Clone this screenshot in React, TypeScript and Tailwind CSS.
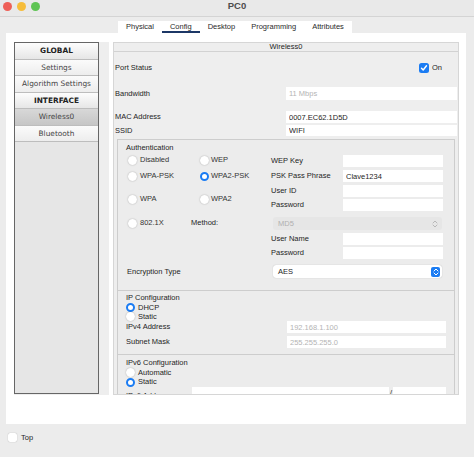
import React from "react";

const listItems: { label: string; kind?: "head" | "sel" }[] = [
  { label: "GLOBAL", kind: "head" },
  { label: "Settings" },
  { label: "Algorithm Settings" },
  { label: "INTERFACE", kind: "head" },
  { label: "Wireless0", kind: "sel" },
  { label: "Bluetooth" },
];

const tabs = ["Physical", "Config", "Desktop", "Programming", "Attributes"];

function Radio({ on }: { on?: boolean }) {
  if (on) {
    return <span className="w-[9px] h-[9px] rounded-full border-[2.5px] border-[#1b7cf3] bg-white shrink-0" />;
  }
  return <span className="w-[9px] h-[9px] rounded-full bg-white shadow-[0_0_1.5px_rgba(0,0,0,0.35)] shrink-0" />;
}

function Field({ value, placeholder, className = "" }: { value?: string; placeholder?: string; className?: string }) {
  return (
    <input
      readOnly
      value={value ?? ""}
      placeholder={placeholder}
      className={`h-full bg-white px-[3px] text-[7.5px] text-[#1e1e1e] placeholder:text-[#b4b4b4] outline-none border-0 ${className}`}
    />
  );
}

function Stepper({ active }: { active?: boolean }) {
  return (
    <span
      className={`w-[9px] h-[10px] rounded-[2px] flex items-center justify-center ${
        active ? "bg-[#1b7cf3]" : ""
      }`}
    >
      <svg width="6" height="8" viewBox="0 0 6 8" fill="none">
        <path d="M1 3 L3 1 L5 3 M1 5 L3 7 L5 5" stroke={active ? "#fff" : "#b8b8b8"} strokeWidth="1" strokeLinecap="round" strokeLinejoin="round" />
      </svg>
    </span>
  );
}

export default function App() {
  return (
    <div className="w-[474px] h-[457px] bg-[#ececec] flex flex-col overflow-hidden font-['Liberation_Sans',Arial,sans-serif] text-[#1e1e1e]">
      {/* Title bar */}
      <div className="h-[17px] shrink-0 border-b border-[#d4d4d4] bg-[#e9e9e9]">
        <div className="h-[13px] flex items-center pl-[3px]">
          <div className="flex gap-[5px] w-[60px]">
            <span className="w-[9px] h-[9px] rounded-full bg-[#ee5f57]" />
            <span className="w-[9px] h-[9px] rounded-full bg-[#f6bd3b]" />
            <span className="w-[9px] h-[9px] rounded-full bg-[#5fc454]" />
          </div>
          <div className="flex-1 text-center text-[9.5px] font-bold text-[#4d4d4d] pr-[63px]">PC0</div>
        </div>
      </div>

      {/* Tabs */}
      <div className="h-[16px] shrink-0 flex items-end pl-[118px]">
        <div className="h-[12px] flex bg-white">
          {tabs.map((t) => (
            <div key={t} className="relative px-[8px] flex items-center text-[7.5px] text-[#2a2a2a]">
              {t}
              {t === "Config" && <span className="absolute left-0 right-0 bottom-0 h-[2px] bg-[#1c3766]" />}
            </div>
          ))}
        </div>
      </div>

      {/* Main */}
      <div className="h-[391px] shrink-0 ml-[6px] w-[460px] bg-white pt-[9px] pl-[8px] flex gap-[4px] items-start">
        {/* Left list */}
        <div className="w-[95px] h-[353px] bg-[#eeeeee] font-['DejaVu_Sans',Verdana,sans-serif]">
          <div className="w-[85px] h-[352px] border border-[#666] bg-[#e6e6e6] flex flex-col">
            {listItems.map((it) => (
              <div
                key={it.label}
                className={`h-[16.5px] shrink-0 flex items-center justify-center border-b border-[#bdbdbd] text-[7.4px] ${
                  it.kind === "head"
                    ? "font-bold text-[#222] bg-linear-to-b from-[#fdfdfd] to-[#e6e6e6]"
                    : it.kind === "sel"
                    ? "text-[#444] bg-linear-to-b from-[#d8d8d8] to-[#c6c6c6]"
                    : "text-[#444] bg-linear-to-b from-[#fbfbfb] to-[#ededed]"
                }`}
              >
                {it.label}
              </div>
            ))}
          </div>
        </div>

        {/* Right panel */}
        <div className="w-[346px] h-[353px] overflow-hidden border border-[#d6d6d6] bg-[#eeeeee] flex flex-col text-[7.5px]">
          <div className="h-[9px] shrink-0 flex items-center justify-center border-b border-[#d2d2d2]">Wireless0</div>

          <div className="h-[32px] shrink-0 flex items-center justify-between pl-[1px] pr-[16px]">
            <span>Port Status</span>
            <div className="flex items-center gap-[3px]">
              <span className="w-[10px] h-[10px] rounded-[2.5px] bg-[#1b7cf3] flex items-center justify-center">
                <svg width="8" height="8" viewBox="0 0 8 8" fill="none">
                  <path d="M1.5 4.2 L3.2 6 L6.5 1.8" stroke="#fff" strokeWidth="1.4" strokeLinecap="round" strokeLinejoin="round" />
                </svg>
              </span>
              <span>On</span>
            </div>
          </div>

          <div className="mt-[3px] h-[13px] shrink-0 flex items-center justify-between pl-[1px] pr-[1px]">
            <span>Bandwidth</span>
            <Field placeholder="11 Mbps" className="w-[171px]" />
          </div>
          <div className="mt-[11px] h-[12px] shrink-0 flex items-center justify-between pl-[1px] pr-[1px]">
            <span>MAC Address</span>
            <Field value="0007.EC62.1D5D" className="w-[171px]" />
          </div>
          <div className="mt-[2px] h-[11px] shrink-0 flex items-center justify-between pl-[1px] pr-[1px]">
            <span>SSID</span>
            <Field value="WIFI" className="w-[171px]" />
          </div>

          {/* Authentication */}
          <div className="mt-[3px] ml-[3px] mr-[3px] shrink-0 border border-[#cdcdcd] bg-[#ececec] flex flex-col pb-[12px]">
            <div className="mt-[3px] h-[10px] flex items-center pl-[8px]">Authentication</div>
            <div className="flex">
              <div className="w-[152px] flex flex-col pl-[10px]">
                <div className="h-[14px] flex items-center">
                  <div className="w-[72px] flex items-center gap-[3px]"><Radio /><span className="text-[#333]">Disabled</span></div>
                  <div className="flex items-center gap-[2px]"><Radio /><span className="text-[#333]">WEP</span></div>
                </div>
                <div className="mt-[2px] h-[14px] flex items-center">
                  <div className="w-[72px] flex items-center gap-[3px]"><Radio /><span className="text-[#333]">WPA-PSK</span></div>
                  <div className="flex items-center gap-[2px]"><Radio on /><span className="text-[#333]">WPA2-PSK</span></div>
                </div>
                <div className="mt-[9px] h-[14px] flex items-center">
                  <div className="w-[72px] flex items-center gap-[3px]"><Radio /><span className="text-[#333]">WPA</span></div>
                  <div className="flex items-center gap-[2px]"><Radio /><span className="text-[#333]">WPA2</span></div>
                </div>
                <div className="mt-[10px] h-[14px] flex items-center">
                  <div className="w-[63px] flex items-center gap-[3px]"><Radio /><span className="text-[#333]">802.1X</span></div>
                  <span>Method:</span>
                </div>
              </div>
              <div className="w-[174px] flex flex-col">
                {[
                  { l: "WEP Key", v: "", mt: "mt-[2px]" },
                  { l: "PSK Pass Phrase", v: "Clave1234", mt: "mt-[3px]" },
                  { l: "User ID", v: "", mt: "mt-[3px]" },
                  { l: "Password", v: "", mt: "mt-[2px]" },
                ].map((r) => (
                  <div key={r.l} className={`${r.mt} h-[12px] flex items-center`}>
                    <span className="w-[73px] pl-[1px]">{r.l}</span>
                    <Field value={r.v} className="w-[100px]" />
                  </div>
                ))}
                <div className="mt-[6px] ml-[3px] w-[169px] h-[13px] rounded-[3px] bg-[#e6e6e6] flex items-center justify-between pl-[5px] pr-[3px] text-[#b0b0b0]">
                  <span>MD5</span>
                  <Stepper />
                </div>
                {[
                  { l: "User Name", mt: "mt-[3px]" },
                  { l: "Password", mt: "mt-[2px]" },
                ].map((r) => (
                  <div key={r.l + r.mt} className={`${r.mt} h-[12px] flex items-center`}>
                    <span className="w-[73px] pl-[1px]">{r.l}</span>
                    <Field className="w-[100px]" />
                  </div>
                ))}
              </div>
            </div>
            <div className="mt-[6px] h-[13px] flex items-center">
              <span className="w-[155px] pl-[9px]">Encryption Type</span>
              <div className="w-[169px] h-full rounded-[3px] bg-white shadow-[0_0_1px_rgba(0,0,0,0.3)] flex items-center justify-between pl-[5px] pr-[2px]">
                <span>AES</span>
                <Stepper active />
              </div>
            </div>
          </div>

          {/* IP Configuration */}
          <div className="ml-[3px] mr-[3px] shrink-0 border-x border-b border-[#cdcdcd] bg-[#ececec] flex flex-col pl-[8px] pr-[8px] pb-[6px]">
            <div className="mt-[2px] h-[10px] flex items-center">IP Configuration</div>
            <div className="h-[9px] flex items-center gap-[3px]"><Radio on /><span>DHCP</span></div>
            <div className="h-[9px] flex items-center gap-[3px]"><Radio /><span>Static</span></div>
            <div className="h-[12px] flex items-center justify-between">
              <span>IPv4 Address</span>
              <Field placeholder="192.168.1.100" className="w-[159px]" />
            </div>
            <div className="mt-[3px] h-[12px] flex items-center justify-between">
              <span>Subnet Mask</span>
              <Field placeholder="255.255.255.0" className="w-[159px]" />
            </div>
          </div>

          {/* IPv6 Configuration */}
          <div className="ml-[3px] mr-[3px] shrink-0 border-x border-[#cdcdcd] bg-[#ececec] flex flex-col pl-[8px] pr-[8px]">
            <div className="mt-[3px] h-[10px] flex items-center">IPv6 Configuration</div>
            <div className="h-[9px] flex items-center gap-[3px]"><Radio /><span>Automatic</span></div>
            <div className="h-[10px] flex items-center gap-[3px]"><Radio on /><span>Static</span></div>
            <div className="h-[12px] flex items-start">
              <span className="w-[66px] pt-[3px]">IPv6 Address</span>
              <Field className="w-[197px]" />
              <span className="w-[4px] text-center">/</span>
              <Field className="w-[53px]" />
            </div>
          </div>
        </div>
      </div>

      {/* Bottom */}
      <div className="flex-1 flex items-start pt-[9px] pl-[8px] gap-[4px]">
        <span className="w-[9px] h-[9px] rounded-[2px] bg-white shadow-[0_0_1px_rgba(0,0,0,0.35)]" />
        <span className="text-[7.5px] leading-[9px]">Top</span>
      </div>
    </div>
  );
}
